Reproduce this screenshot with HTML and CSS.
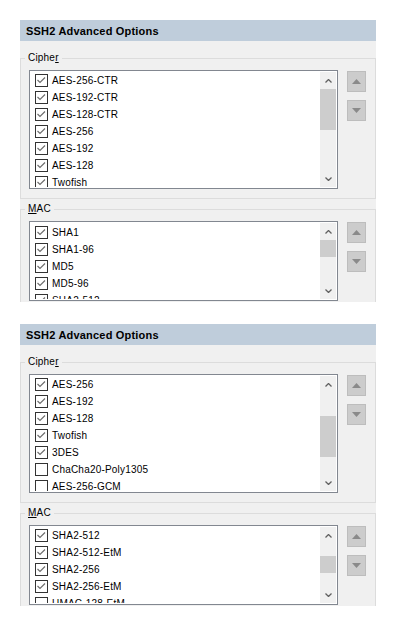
FILE: index.html
```html
<!DOCTYPE html>
<html>
<head>
<meta charset="utf-8">
<link rel="stylesheet" href="styles.css">
</head>
<body>
<div class="page">
  <section class="panel">
    <div class="panel-head">SSH2 Advanced Options</div>
    <div class="panel-body">
      <fieldset class="group">
        <legend>Ciphe<u>r</u></legend>
        <div class="group-row">
          <div class="listbox">
            <ul class="items">
              <li class="item"><span class="check on"><svg viewBox="0 0 11 11"><polyline points="1.5,5 4,7.5 9,2.5"/></svg></span>AES-256-CTR</li>
              <li class="item"><span class="check on"><svg viewBox="0 0 11 11"><polyline points="1.5,5 4,7.5 9,2.5"/></svg></span>AES-192-CTR</li>
              <li class="item"><span class="check on"><svg viewBox="0 0 11 11"><polyline points="1.5,5 4,7.5 9,2.5"/></svg></span>AES-128-CTR</li>
              <li class="item"><span class="check on"><svg viewBox="0 0 11 11"><polyline points="1.5,5 4,7.5 9,2.5"/></svg></span>AES-256</li>
              <li class="item"><span class="check on"><svg viewBox="0 0 11 11"><polyline points="1.5,5 4,7.5 9,2.5"/></svg></span>AES-192</li>
              <li class="item"><span class="check on"><svg viewBox="0 0 11 11"><polyline points="1.5,5 4,7.5 9,2.5"/></svg></span>AES-128</li>
              <li class="item"><span class="check on"><svg viewBox="0 0 11 11"><polyline points="1.5,5 4,7.5 9,2.5"/></svg></span>Twofish</li>
              <li class="item"><span class="check on"><svg viewBox="0 0 11 11"><polyline points="1.5,5 4,7.5 9,2.5"/></svg></span>3DES</li>
            </ul>
            <div class="scrollbar">
              <div class="sb-btn"><svg class="chev" viewBox="0 0 7 4"><polyline points="0.5,3.5 3.5,0.5 6.5,3.5"/></svg></div>
              <div class="sb-track"><div class="sb-thumb" style="margin-top:0px;height:41px"></div></div>
              <div class="sb-btn"><svg class="chev" viewBox="0 0 7 4"><polyline points="0.5,0.5 3.5,3.5 6.5,0.5"/></svg></div>
            </div>
          </div>
          <div class="movers">
            <button class="mover"><svg viewBox="0 0 9 5"><polygon points="0,5 4.5,0 9,5"/></svg></button>
            <button class="mover"><svg viewBox="0 0 9 5"><polygon points="0,0 4.5,5 9,0"/></svg></button>
          </div>
        </div>
      </fieldset>
      <fieldset class="group group--mac">
        <legend><u>M</u>AC</legend>
        <div class="group-row">
          <div class="listbox listbox--short">
            <ul class="items shift-1">
              <li class="item"><span class="check on"><svg viewBox="0 0 11 11"><polyline points="1.5,5 4,7.5 9,2.5"/></svg></span>SHA1</li>
              <li class="item"><span class="check on"><svg viewBox="0 0 11 11"><polyline points="1.5,5 4,7.5 9,2.5"/></svg></span>SHA1-96</li>
              <li class="item"><span class="check on"><svg viewBox="0 0 11 11"><polyline points="1.5,5 4,7.5 9,2.5"/></svg></span>MD5</li>
              <li class="item"><span class="check on"><svg viewBox="0 0 11 11"><polyline points="1.5,5 4,7.5 9,2.5"/></svg></span>MD5-96</li>
              <li class="item"><span class="check on"><svg viewBox="0 0 11 11"><polyline points="1.5,5 4,7.5 9,2.5"/></svg></span>SHA2-512</li>
            </ul>
            <div class="scrollbar">
              <div class="sb-btn"><svg class="chev" viewBox="0 0 7 4"><polyline points="0.5,3.5 3.5,0.5 6.5,3.5"/></svg></div>
              <div class="sb-track"><div class="sb-thumb" style="margin-top:0px;height:17px"></div></div>
              <div class="sb-btn"><svg class="chev" viewBox="0 0 7 4"><polyline points="0.5,0.5 3.5,3.5 6.5,0.5"/></svg></div>
            </div>
          </div>
          <div class="movers">
            <button class="mover"><svg viewBox="0 0 9 5"><polygon points="0,5 4.5,0 9,5"/></svg></button>
            <button class="mover"><svg viewBox="0 0 9 5"><polygon points="0,0 4.5,5 9,0"/></svg></button>
          </div>
        </div>
      </fieldset>
    </div>
  </section>

  <section class="panel">
    <div class="panel-head">SSH2 Advanced Options</div>
    <div class="panel-body">
      <fieldset class="group">
        <legend>Ciphe<u>r</u></legend>
        <div class="group-row">
          <div class="listbox">
            <ul class="items">
              <li class="item"><span class="check on"><svg viewBox="0 0 11 11"><polyline points="1.5,5 4,7.5 9,2.5"/></svg></span>AES-256</li>
              <li class="item"><span class="check on"><svg viewBox="0 0 11 11"><polyline points="1.5,5 4,7.5 9,2.5"/></svg></span>AES-192</li>
              <li class="item"><span class="check on"><svg viewBox="0 0 11 11"><polyline points="1.5,5 4,7.5 9,2.5"/></svg></span>AES-128</li>
              <li class="item"><span class="check on"><svg viewBox="0 0 11 11"><polyline points="1.5,5 4,7.5 9,2.5"/></svg></span>Twofish</li>
              <li class="item"><span class="check on"><svg viewBox="0 0 11 11"><polyline points="1.5,5 4,7.5 9,2.5"/></svg></span>3DES</li>
              <li class="item"><span class="check"></span>ChaCha20-Poly1305</li>
              <li class="item"><span class="check"></span>AES-256-GCM</li>
              <li class="item"><span class="check"></span>AES-128-GCM</li>
            </ul>
            <div class="scrollbar">
              <div class="sb-btn"><svg class="chev" viewBox="0 0 7 4"><polyline points="0.5,3.5 3.5,0.5 6.5,3.5"/></svg></div>
              <div class="sb-track"><div class="sb-thumb" style="margin-top:23px;height:41px"></div></div>
              <div class="sb-btn"><svg class="chev" viewBox="0 0 7 4"><polyline points="0.5,0.5 3.5,3.5 6.5,0.5"/></svg></div>
            </div>
          </div>
          <div class="movers">
            <button class="mover"><svg viewBox="0 0 9 5"><polygon points="0,5 4.5,0 9,5"/></svg></button>
            <button class="mover"><svg viewBox="0 0 9 5"><polygon points="0,0 4.5,5 9,0"/></svg></button>
          </div>
        </div>
      </fieldset>
      <fieldset class="group group--mac">
        <legend><u>M</u>AC</legend>
        <div class="group-row">
          <div class="listbox listbox--short">
            <ul class="items">
              <li class="item"><span class="check on"><svg viewBox="0 0 11 11"><polyline points="1.5,5 4,7.5 9,2.5"/></svg></span>SHA2-512</li>
              <li class="item"><span class="check on"><svg viewBox="0 0 11 11"><polyline points="1.5,5 4,7.5 9,2.5"/></svg></span>SHA2-512-EtM</li>
              <li class="item"><span class="check on"><svg viewBox="0 0 11 11"><polyline points="1.5,5 4,7.5 9,2.5"/></svg></span>SHA2-256</li>
              <li class="item"><span class="check on"><svg viewBox="0 0 11 11"><polyline points="1.5,5 4,7.5 9,2.5"/></svg></span>SHA2-256-EtM</li>
              <li class="item"><span class="check"></span>UMAC-128-EtM</li>
            </ul>
            <div class="scrollbar">
              <div class="sb-btn"><svg class="chev" viewBox="0 0 7 4"><polyline points="0.5,3.5 3.5,0.5 6.5,3.5"/></svg></div>
              <div class="sb-track"><div class="sb-thumb" style="margin-top:12px;height:17px"></div></div>
              <div class="sb-btn"><svg class="chev" viewBox="0 0 7 4"><polyline points="0.5,0.5 3.5,3.5 6.5,0.5"/></svg></div>
            </div>
          </div>
          <div class="movers">
            <button class="mover"><svg viewBox="0 0 9 5"><polygon points="0,5 4.5,0 9,5"/></svg></button>
            <button class="mover"><svg viewBox="0 0 9 5"><polygon points="0,0 4.5,5 9,0"/></svg></button>
          </div>
        </div>
      </fieldset>
    </div>
  </section>
</div>
</body>
</html>
```

FILE: styles.css
```css
* { box-sizing: border-box; }
html, body { margin: 0; background: #fff; }
body {
  font-family: "Liberation Sans", Arial, sans-serif;
  font-size: 10px;
  color: #000;
}
.page {
  padding: 20px 0 0 20px;
  display: flex;
  flex-direction: column;
  gap: 22px;
}
.panel {
  width: 356px;
  height: 282px;
  overflow: hidden;
  background: #f0f0f0;
  flex: none;
}
.panel-head {
  height: 21px;
  padding: 1px 0 0 6px;
  line-height: 20px;
  background: #bfcddb;
  font-weight: bold;
  font-size: 11px;
  letter-spacing: 0.2px;
  color: #000;
}
.panel-body { padding-top: 11px; }
.group {
  margin: 0;
  border: 1px solid #dcdcdc;
  padding: 6px 9px 9px 8px;
  min-width: 0;
}
.group--mac { margin-top: 4px; }
.group legend {
  padding: 0 3px;
  margin-left: -4px;
  line-height: 12px;
  font-size: 10px;
  letter-spacing: 0.2px;
}
.group legend u { text-decoration: underline; }
.group-row {
  display: flex;
  gap: 9px;
  align-items: flex-start;
}
.listbox {
  flex: 1;
  height: 119px;
  border: 1px solid #828790;
  background: #fff;
  padding: 1px;
  display: flex;
  overflow: hidden;
}
.listbox--short { height: 80px; }
.items {
  list-style: none;
  margin: 0;
  padding: 0 0 0 4px;
  flex: 1;
  overflow: hidden;
}
.shift-1 { padding-top: 1px; }
.item {
  height: 17px;
  line-height: 17px;
  display: flex;
  align-items: center;
  gap: 4px;
  white-space: nowrap;
  letter-spacing: 0.2px;
}
.check {
  width: 13px;
  height: 13px;
  border: 1px solid #333;
  background: #fff;
  flex: none;
  display: flex;
}
.check svg {
  width: 11px;
  height: 11px;
  fill: none;
  stroke: #6e6e6e;
  stroke-width: 1.2;
}
.scrollbar {
  width: 16px;
  background: #f0f0f0;
  display: flex;
  flex-direction: column;
  flex: none;
}
.sb-btn {
  height: 17px;
  flex: none;
  display: flex;
  align-items: center;
  justify-content: center;
}
.chev {
  width: 7px;
  height: 4px;
  fill: none;
  stroke: #606060;
  stroke-width: 1.3;
}
.sb-track { flex: 1; }
.sb-thumb { background: #cdcdcd; }
.movers {
  display: flex;
  flex-direction: column;
  gap: 8px;
  padding-top: 1px;
}
.mover {
  width: 19px;
  height: 21px;
  background: #cccccc;
  border: 1px solid #bdbdbd;
  padding: 0;
  margin: 0;
  display: flex;
  align-items: center;
  justify-content: center;
}
.mover svg {
  width: 9px;
  height: 5px;
  fill: #8a8a8a;
}
```
